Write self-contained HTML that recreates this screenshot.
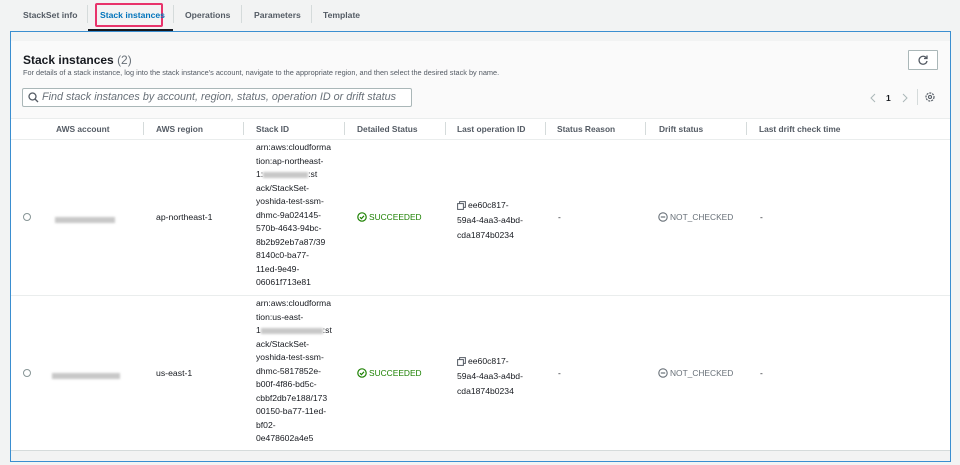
<!DOCTYPE html>
<html><head><style>
*{margin:0;padding:0;box-sizing:border-box}
body{width:960px;height:465px;background:#f2f3f3;font-family:"Liberation Sans",sans-serif;color:#16191f;position:relative;overflow:hidden;font-size:8.5px}
.a{position:absolute;white-space:nowrap}
.tab{font-weight:bold;font-size:8.6px;color:#545b64;top:10px}
.vs{position:absolute;width:1px;background:#d5dbdb}
.hd{font-weight:bold;font-size:8.4px;color:#545b64;top:124px}
.sid{position:absolute;left:256px;line-height:13.5px;font-size:8.6px}
.blur{display:inline-block;height:6px;background:#c8c8c8;vertical-align:middle;filter:blur(1px)}
.ok{color:#1d8102;font-size:8.4px}
.nc{color:#687078;font-size:8.4px}
.ic{display:inline-block;vertical-align:-2px;margin-right:2px}
</style></head><body>
<div class="a tab" style="left:23px">StackSet info</div>
<div class="vs" style="left:87px;top:5px;height:18px"></div>
<div class="a" style="left:95px;top:3px;width:68px;height:24px;border:2px solid #e8336b;border-radius:2px"></div>
<div class="a tab" style="left:100px;color:#0073bb">Stack instances</div>
<div class="a" style="left:88px;top:29px;width:85px;height:2px;background:#16191f"></div>
<div class="vs" style="left:173px;top:5px;height:18px"></div>
<div class="a tab" style="left:185px">Operations</div>
<div class="vs" style="left:241px;top:5px;height:18px"></div>
<div class="a tab" style="left:254px">Parameters</div>
<div class="vs" style="left:311px;top:5px;height:18px"></div>
<div class="a tab" style="left:323px">Template</div>

<div class="a" style="left:10px;top:31px;width:941px;height:431px;border:1.5px solid #3a8ed0;background:#f2f3f3"></div>
<div class="a" style="left:11px;top:41px;width:939px;height:410px;background:#fff;border-bottom:1px solid #d5dbdb"></div>
<div class="a" style="left:11px;top:41px;width:939px;height:77px;background:#fafafa"></div>

<div class="a" style="left:23px;top:53px;font-size:12px;font-weight:bold">Stack instances <span style="font-weight:normal;color:#687078">(2)</span></div>
<div class="a" style="left:23px;top:68px;font-size:7.35px;color:#545b64">For details of a stack instance, log into the stack instance's account, navigate to the appropriate region, and then select the desired stack by name.</div>
<div class="a" style="left:908px;top:50px;width:30px;height:20px;border:1px solid #aab7b8;background:#fff;border-radius:1px"></div>
<svg class="a" style="left:917px;top:54px" width="12" height="12" viewBox="0 0 12 12"><path d="M9.5 4.2A4 4 0 1 0 10 7" fill="none" stroke="#545b64" stroke-width="1.3"/><path d="M10 1.5V4.5H7" fill="none" stroke="#545b64" stroke-width="1.3"/></svg>

<div class="a" style="left:22px;top:88px;width:390px;height:19px;border:1px solid #aab7b8;background:#fff;border-radius:2px"></div>
<svg class="a" style="left:28px;top:92px" width="11" height="11" viewBox="0 0 11 11"><circle cx="4.5" cy="4.5" r="3.5" fill="none" stroke="#545b64" stroke-width="1.3"/><path d="M7 7L10 10" stroke="#545b64" stroke-width="1.3"/></svg>
<div class="a" style="left:42px;top:91px;font-style:italic;color:#687078;font-size:10.8px">Find stack instances by account, region, status, operation ID or drift status</div>

<svg class="a" style="left:870px;top:93px" width="6" height="10" viewBox="0 0 6 10"><path d="M5 1L1 5L5 9" fill="none" stroke="#aab7b8" stroke-width="1"/></svg>
<div class="a" style="left:886px;top:93px;font-weight:bold;font-size:8.5px">1</div>
<svg class="a" style="left:902px;top:93px" width="6" height="10" viewBox="0 0 6 10"><path d="M1 1L5 5L1 9" fill="none" stroke="#aab7b8" stroke-width="1"/></svg>
<div class="vs" style="left:917px;top:89px;height:16px"></div>
<svg class="a" style="left:925px;top:92px" width="10" height="10" viewBox="0 0 10 10"><circle cx="5" cy="5" r="4" fill="none" stroke="#545b64" stroke-width="1.2" stroke-dasharray="2 1"/><circle cx="5" cy="5" r="1.5" fill="none" stroke="#545b64" stroke-width="1.1"/></svg>

<div class="a" style="left:11px;top:118px;width:939px;height:1px;background:#eaeded"></div>
<div class="a" style="left:11px;top:139px;width:939px;height:1px;background:#eaeded"></div>
<div class="a" style="left:11px;top:295px;width:939px;height:1px;background:#eaeded"></div>
<div class="vs" style="left:143px;top:122px;height:13px"></div>
<div class="vs" style="left:243px;top:122px;height:13px"></div>
<div class="vs" style="left:344px;top:122px;height:13px"></div>
<div class="vs" style="left:445px;top:122px;height:13px"></div>
<div class="vs" style="left:545px;top:122px;height:13px"></div>
<div class="vs" style="left:645px;top:122px;height:13px"></div>
<div class="vs" style="left:746px;top:122px;height:13px"></div>
<div class="a hd" style="left:56px">AWS account</div>
<div class="a hd" style="left:156px">AWS region</div>
<div class="a hd" style="left:256px">Stack ID</div>
<div class="a hd" style="left:357px">Detailed Status</div>
<div class="a hd" style="left:457px">Last operation ID</div>
<div class="a hd" style="left:557px">Status Reason</div>
<div class="a hd" style="left:659px">Drift status</div>
<div class="a hd" style="left:759px">Last drift check time</div>

<!-- row 1 -->
<div class="a" style="left:23px;top:213px;width:8px;height:8px;border:1px solid #879596;border-radius:50%"></div>
<div class="a" style="left:55px;top:214px"><span class="blur" style="width:60px"></span></div>
<div class="a" style="left:156px;top:212px;font-size:8.7px">ap-northeast-1</div>
<div class="sid" style="top:141px">arn:aws:cloudforma<br>tion:ap-northeast-<br>1:<span class="blur" style="width:45px"></span>:st<br>ack/StackSet-<br>yoshida-test-ssm-<br>dhmc-9a024145-<br>570b-4643-94bc-<br>8b2b92eb7a87/39<br>8140c0-ba77-<br>11ed-9e49-<br>06061f713e81</div>
<div class="a ok" style="left:357px;top:212px"><svg class="ic" width="10" height="10" viewBox="0 0 10 10"><circle cx="5" cy="5" r="4.2" fill="none" stroke="#1d8102" stroke-width="1.2"/><path d="M3 5.2L4.4 6.6L7 3.8" fill="none" stroke="#1d8102" stroke-width="1.2"/></svg>SUCCEEDED</div>
<div class="a" style="left:457px;top:198px;line-height:15px;font-size:8.6px"><svg class="ic" width="9" height="9" viewBox="0 0 9 9"><rect x="0.6" y="2.6" width="5.8" height="5.8" fill="none" stroke="#545b64" stroke-width="1"/><path d="M2.6 2.6V0.6H8.4V6.4H6.4" fill="none" stroke="#545b64" stroke-width="1"/></svg>ee60c817-<br>59a4-4aa3-a4bd-<br>cda1874b0234</div>
<div class="a" style="left:558px;top:212px">-</div>
<div class="a nc" style="left:658px;top:212px"><svg class="ic" width="10" height="10" viewBox="0 0 10 10"><circle cx="5" cy="5" r="4.2" fill="none" stroke="#687078" stroke-width="1.1"/><path d="M2.8 5H7.2" stroke="#687078" stroke-width="1.2"/></svg>NOT_CHECKED</div>
<div class="a" style="left:760px;top:212px">-</div>

<!-- row 2 -->
<div class="a" style="left:23px;top:369px;width:8px;height:8px;border:1px solid #879596;border-radius:50%"></div>
<div class="a" style="left:52px;top:370px"><span class="blur" style="width:68px"></span></div>
<div class="a" style="left:156px;top:368px;font-size:8.7px">us-east-1</div>
<div class="sid" style="top:297px">arn:aws:cloudforma<br>tion:us-east-<br>1<span class="blur" style="width:62px"></span>:st<br>ack/StackSet-<br>yoshida-test-ssm-<br>dhmc-5817852e-<br>b00f-4f86-bd5c-<br>cbbf2db7e188/173<br>00150-ba77-11ed-<br>bf02-<br>0e478602a4e5</div>
<div class="a ok" style="left:357px;top:368px"><svg class="ic" width="10" height="10" viewBox="0 0 10 10"><circle cx="5" cy="5" r="4.2" fill="none" stroke="#1d8102" stroke-width="1.2"/><path d="M3 5.2L4.4 6.6L7 3.8" fill="none" stroke="#1d8102" stroke-width="1.2"/></svg>SUCCEEDED</div>
<div class="a" style="left:457px;top:354px;line-height:15px;font-size:8.6px"><svg class="ic" width="9" height="9" viewBox="0 0 9 9"><rect x="0.6" y="2.6" width="5.8" height="5.8" fill="none" stroke="#545b64" stroke-width="1"/><path d="M2.6 2.6V0.6H8.4V6.4H6.4" fill="none" stroke="#545b64" stroke-width="1"/></svg>ee60c817-<br>59a4-4aa3-a4bd-<br>cda1874b0234</div>
<div class="a" style="left:558px;top:368px">-</div>
<div class="a nc" style="left:658px;top:368px"><svg class="ic" width="10" height="10" viewBox="0 0 10 10"><circle cx="5" cy="5" r="4.2" fill="none" stroke="#687078" stroke-width="1.1"/><path d="M2.8 5H7.2" stroke="#687078" stroke-width="1.2"/></svg>NOT_CHECKED</div>
<div class="a" style="left:760px;top:368px">-</div>
</body></html>
